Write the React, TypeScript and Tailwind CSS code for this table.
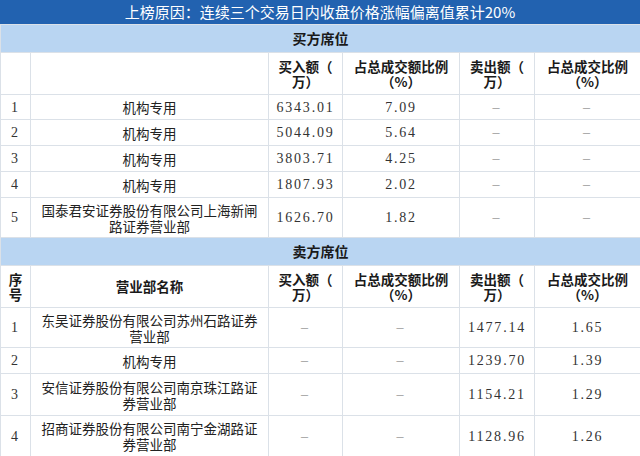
import React from "react";

type Row = {
  no: string;
  name: React.ReactNode;
  buy: string;
  buyPct: string;
  sell: string;
  sellPct: string;
  h: string;
};

const buyRows: Row[] = [
  { no: "1", name: "机构专用", buy: "6343.01", buyPct: "7.09", sell: "-", sellPct: "-", h: "h-[25px]" },
  { no: "2", name: "机构专用", buy: "5044.09", buyPct: "5.64", sell: "-", sellPct: "-", h: "h-[26px]" },
  { no: "3", name: "机构专用", buy: "3803.71", buyPct: "4.25", sell: "-", sellPct: "-", h: "h-[26px]" },
  { no: "4", name: "机构专用", buy: "1807.93", buyPct: "2.02", sell: "-", sellPct: "-", h: "h-[26px]" },
  {
    no: "5",
    name: (
      <>
        国泰君安证券股份有限公司上海新闸
        <br />
        路证券营业部
      </>
    ),
    buy: "1626.70",
    buyPct: "1.82",
    sell: "-",
    sellPct: "-",
    h: "h-[40px]",
  },
];

const sellRows: Row[] = [
  {
    no: "1",
    name: (
      <>
        东吴证券股份有限公司苏州石路证券
        <br />
        营业部
      </>
    ),
    buy: "-",
    buyPct: "-",
    sell: "1477.14",
    sellPct: "1.65",
    h: "h-[40px]",
  },
  { no: "2", name: "机构专用", buy: "-", buyPct: "-", sell: "1239.70", sellPct: "1.39", h: "h-[26px]" },
  {
    no: "3",
    name: (
      <>
        安信证券股份有限公司南京珠江路证
        <br />
        券营业部
      </>
    ),
    buy: "-",
    buyPct: "-",
    sell: "1154.21",
    sellPct: "1.29",
    h: "h-[42px]",
  },
  {
    no: "4",
    name: (
      <>
        招商证券股份有限公司南宁金湖路证
        <br />
        券营业部
      </>
    ),
    buy: "-",
    buyPct: "-",
    sell: "1128.96",
    sellPct: "1.26",
    h: "h-[41px]",
  },
];

const cjk = "font-['Noto_Sans_CJK_SC',sans-serif]";
const num = "font-['Liberation_Serif','Noto_Sans_CJK_SC',serif] tracking-[1.8px]";
const cell = "border border-[#dbe1e8] text-center align-middle p-0";

function SectionTitle({ text }: { text: string }) {
  return (
    <tr className="h-[28px] bg-[#b9d5f2]">
      <td colSpan={6} className={`border border-[#dbe1e8] text-center align-middle text-[14px] font-bold text-[#1a1a1a] ${cjk}`}>
        {text}
      </td>
    </tr>
  );
}

function HeadRow({ h, first, second }: { h: string; first?: React.ReactNode; second?: string }) {
  const th = `${cell} font-bold text-[13.5px] leading-[15px] text-[#1a1a1a] ${cjk}`;
  return (
    <tr className={h}>
      <td className={th}>{first}</td>
      <td className={th}>{second}</td>
      <td className={th}>
        买入额（
        <br />
        万）
      </td>
      <td className={th}>
        占总成交额比例
        <br />
        （%）
      </td>
      <td className={th}>
        卖出额（
        <br />
        万）
      </td>
      <td className={th}>
        占总成交比例
        <br />
        （%）
      </td>
    </tr>
  );
}

function Val({ v }: { v: string }) {
  if (v === "-") return <span className="text-[#999]">–</span>;
  return <>{v}</>;
}

function DataRow({ r }: { r: Row }) {
  const n = `${cell} text-[14px] text-[#333] ${num}`;
  return (
    <tr className={r.h}>
      <td className={n}>{r.no}</td>
      <td className={`${cell} text-[13.5px] leading-[16px] text-[#222] ${cjk}`}>{r.name}</td>
      <td className={n}>
        <Val v={r.buy} />
      </td>
      <td className={n}>
        <Val v={r.buyPct} />
      </td>
      <td className={n}>
        <Val v={r.sell} />
      </td>
      <td className={n}>
        <Val v={r.sellPct} />
      </td>
    </tr>
  );
}

export default function App() {
  return (
    <div className="w-[640px] h-[456px] overflow-hidden bg-white">
      <div className={`h-[24px] bg-[#2262b0] flex items-center justify-center text-white text-[15px] ${cjk}`}>
        上榜原因：连续三个交易日内收盘价格涨幅偏离值累计20%
      </div>
      <table className="w-full border-collapse table-fixed">
        <colgroup>
          <col className="w-[30px]" />
          <col className="w-[238px]" />
          <col className="w-[74px]" />
          <col className="w-[117px]" />
          <col className="w-[75px]" />
          <col className="w-[106px]" />
        </colgroup>
        <tbody>
          <SectionTitle text="买方席位" />
          <HeadRow h="h-[42px]" />
          {buyRows.map((r) => (
            <DataRow key={"b" + r.no} r={r} />
          ))}
          <SectionTitle text="卖方席位" />
          <HeadRow
            h="h-[42px]"
            first={
              <>
                序
                <br />
                号
              </>
            }
            second="营业部名称"
          />
          {sellRows.map((r) => (
            <DataRow key={"s" + r.no} r={r} />
          ))}
        </tbody>
      </table>
    </div>
  );
}
